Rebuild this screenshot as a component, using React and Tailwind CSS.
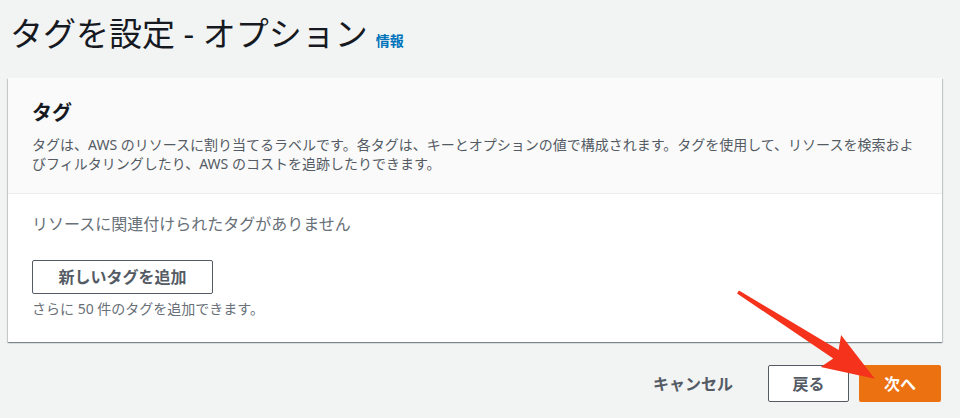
import React from "react";

export default function App() {
  return (
    <div className="relative w-[960px] min-h-[418px] overflow-hidden bg-[#f2f3f3] font-['Noto_Sans','Noto_Sans_CJK_JP',sans-serif] text-[#16191f]">
      <div className="flex items-baseline gap-[8px] pl-[10px] pt-[14px]">
        <h1 className="text-[33px] leading-[40px] font-normal text-[#16191f]">タグを設定 - オプション</h1>
        <a className="text-[14px] font-bold leading-[18px] text-[#0073bb]">情報</a>
      </div>

      <div className="mx-[8px] mt-[24px] w-[934px] bg-white shadow-[0_1px_1px_0_rgba(0,28,36,0.3),1px_1px_1px_0_rgba(0,28,36,0.15),-1px_1px_1px_0_rgba(0,28,36,0.15)]">
        <div className="h-[116px] border-b border-[#eaeded] bg-[#fafafa] px-[24px] pt-[21px]">
          <h2 className="text-[20px] font-bold leading-[28px] text-[#16191f]">タグ</h2>
          <p className="mt-[8px] text-[14px] leading-[19px] text-[#545b64]">
            タグは、AWS のリソースに割り当てるラベルです。各タグは、キーとオプションの値で構成されます。タグを使用して、リソースを検索およ
            <br />
            びフィルタリングしたり、AWS のコストを追跡したりできます。
          </p>
        </div>
        <div className="px-[24px] pt-[18px] pb-[24px]">
          <p className="text-[16px] leading-[24px] text-[#687078]">リソースに関連付けられたタグがありません</p>
          <button className="mt-[24px] flex h-[34px] w-[181px] items-center justify-center rounded-[2px] border border-[#545b64] bg-white text-[16px] font-bold text-[#545b64]">
            新しいタグを追加
          </button>
          <p className="mt-[5px] text-[14px] leading-[19px] text-[#687078]">さらに 50 件のタグを追加できます。</p>
        </div>
      </div>

      <div className="mt-[23px] flex w-[941px] items-center justify-end">
        <button className="mr-[15px] flex h-[37px] items-center px-[20px] text-[16px] font-bold text-[#545b64]">キャンセル</button>
        <button className="flex h-[37px] w-[81px] items-center justify-center rounded-[2px] border border-[#545b64] bg-white text-[16px] font-bold text-[#545b64]">
          戻る
        </button>
        <button className="ml-[10px] flex h-[37px] w-[82px] items-center justify-center rounded-[2px] bg-[#ec7211] text-[16px] font-bold text-white">
          次へ
        </button>
      </div>

      <svg className="pointer-events-none absolute left-0 top-0" width="960" height="418" viewBox="0 0 960 418">
        <g transform="translate(738 292) rotate(32.4)">
          <polygon
            points="0,-1.8 116,-5 110,-19 162,0 110,19 116,5 0,1.8"
            fill="#f5331c"
          />
        </g>
      </svg>
    </div>
  );
}
